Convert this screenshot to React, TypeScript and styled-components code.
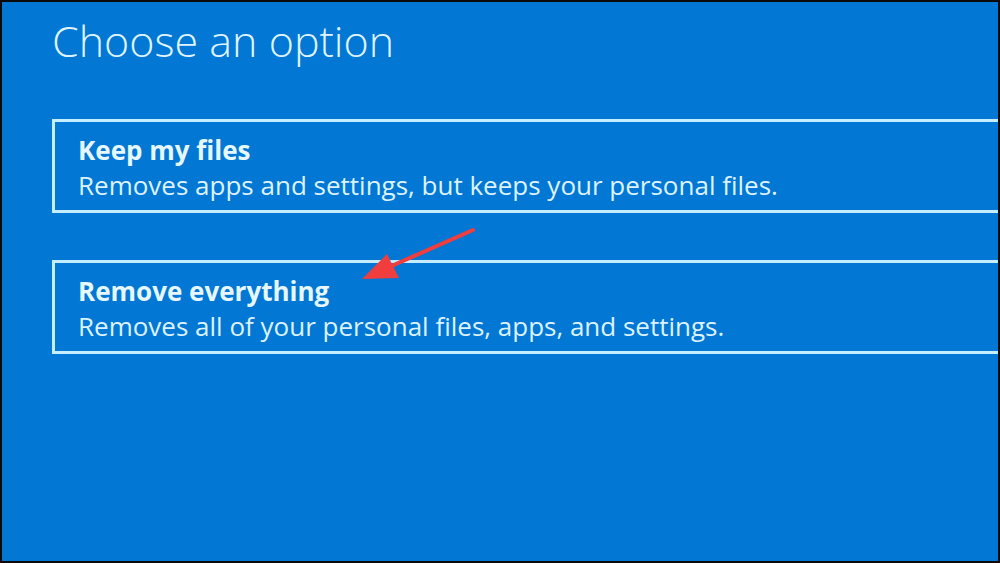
import React from 'react';
import styled, { createGlobalStyle } from 'styled-components';

const GlobalStyle = createGlobalStyle`
  html, body {
    margin: 0;
    padding: 0;
    background: #000;
  }
  body {
    font-family: "Open Sans", "Liberation Sans", sans-serif;
  }
`;

const Screen = styled.div`
  box-sizing: border-box;
  width: 1000px;
  height: 563px;
  border: 2px solid #0a0a0a;
  background: #0277d3;
  overflow: hidden;
  position: relative;
  padding: 11px 0 0 50px;
`;

const Title = styled.h1`
  margin: 0 0 50px 0;
  font-weight: 300;
  font-size: 43px;
  line-height: 56px;
  color: #dff4ff;
`;

const OptionList = styled.div`
  display: flex;
  flex-direction: column;
  gap: 47px;
`;

const Option = styled.div`
  box-sizing: border-box;
  width: 980px;
  height: 94px;
  border: 3px solid #c4eeff;
  padding: 13px 0 0 23px;
  display: flex;
  flex-direction: column;
`;

const OptionName = styled.div`
  font-weight: 700;
  font-size: 26px;
  line-height: 30px;
  color: #e6f7ff;
  white-space: nowrap;
`;

const OptionText = styled.div`
  font-weight: 400;
  font-size: 26px;
  line-height: 40px;
  color: #dcf3ff;
  white-space: nowrap;
`;

const Arrow = styled.svg`
  position: absolute;
  left: 0;
  top: 0;
  pointer-events: none;
`;

const options = [
  { name: 'Keep my files', text: 'Removes apps and settings, but keeps your personal files.' },
  { name: 'Remove everything', text: 'Removes all of your personal files, apps, and settings.' },
];

export default function App() {
  return (
    <>
      <GlobalStyle />
      <Screen>
        <Title>Choose an option</Title>
        <OptionList>
          {options.map((o) => (
            <Option key={o.name}>
              <OptionName>{o.name}</OptionName>
              <OptionText>{o.text}</OptionText>
            </Option>
          ))}
        </OptionList>
        <Arrow width="1000" height="563" viewBox="0 0 1000 563">
          <line x1="471" y1="228" x2="385" y2="266" stroke="#f03e3e" strokeWidth="4" strokeLinecap="round" />
          <polygon points="360,277 385,252 397,276" fill="#f03e3e" />
        </Arrow>
      </Screen>
    </>
  );
}
